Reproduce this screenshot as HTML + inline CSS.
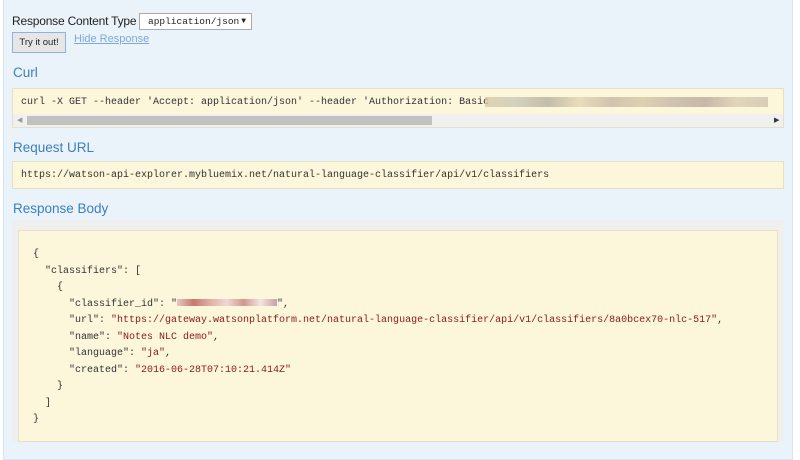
<!DOCTYPE html>
<html><head><style>
body{margin:0;width:800px;height:447px;overflow:hidden;background:#fff;font-family:"Liberation Sans",sans-serif;}
.wrap{position:absolute;left:3px;top:-2px;width:788px;height:460px;background:#ebf3fa;border:1px solid #d6e4f2;}
.abs{position:absolute;}
.mono{font-family:"Liberation Mono",monospace;font-size:10px;color:#333;}
h4{position:absolute;margin:0;font-weight:normal;font-size:13.5px;color:#3a7fbf;}
.box{position:absolute;background:#fcf6db;border:1px solid #e5e0c6;}
</style></head><body>
<div class="wrap"></div>
<div class="abs" style="left:12px;top:14px;font-size:12px;color:#222;letter-spacing:-0.2px">Response Content Type</div>
<div class="abs mono" style="left:139px;top:13px;width:113px;height:17px;background:#fff;border:1px solid #aaa;box-sizing:border-box;font-size:9.5px;line-height:15px;padding-left:8px;color:#222">application/json <span style="position:absolute;right:5px;font-size:8px">▼</span></div>
<div class="abs" style="left:12px;top:32px;width:54px;height:21px;background:#e6e6e6;border:1px solid #8fb3dd;box-sizing:border-box;font-size:9.5px;line-height:19px;text-align:center;color:#222">Try it out!</div>
<div class="abs" style="left:74px;top:33px;font-size:11px;color:#7ea9d8;text-decoration:underline">Hide Response</div>
<h4 style="left:13px;top:65px">Curl</h4>
<div class="box" style="left:12px;top:88px;width:770px;height:38px;overflow:hidden">
<div class="abs mono" style="left:8px;top:8px;white-space:nowrap">curl -X GET --header 'Accept: application/json' --header 'Authorization: Basic</div>
<div class="abs" style="left:472px;top:8px;width:283px;height:10px;background:linear-gradient(90deg,#d8c9a8,#c9c8b6,#b5b09a,#e2d6b4,#c6b8a4,#d4c7a7,#c2b6a5,#b9a99a,#d8cdb3,#cfc4ae);opacity:.8"></div>
<div class="abs" style="left:0;top:25px;width:770px;height:13px;background:#f0f0f0"></div>
<div class="abs" style="left:14px;top:27px;width:405px;height:9px;background:#c1c1c1"></div>
<div class="abs" style="left:4px;top:27px;font-size:7px;color:#999">◀</div>
<div class="abs" style="left:761px;top:27px;font-size:7px;color:#333">▶</div>
</div>
<h4 style="left:13px;top:140px">Request URL</h4>
<div class="box" style="left:12px;top:161px;width:770px;height:26px"><div class="abs mono" style="left:8px;top:8px">https://watson-api-explorer.mybluemix.net/natural-language-classifier/api/v1/classifiers</div></div>
<h4 style="left:13px;top:201px">Response Body</h4>
<div class="abs" style="left:12px;top:220px;width:772px;height:222px;background:#efefef"></div>
<div class="box" style="left:18px;top:230px;width:758px;height:210px">
<pre class="abs mono" style="left:14px;top:16px;margin:0;line-height:16.5px">{
  "classifiers": [
    {
      "classifier_id": "<span style="display:inline-block;width:100px;height:7px;background:linear-gradient(90deg,#e8c8c0,#c47a70,#e0b0a8,#f0d8d0,#d09890,#f5e5e0,#c8a0a8)"></span>",
      "url": <span style="color:#8b1a1a">"https://gateway.watsonplatform.net/natural-language-classifier/api/v1/classifiers/8a0bcex70-nlc-517"</span>,
      "name": <span style="color:#8b1a1a">"Notes NLC demo"</span>,
      "language": <span style="color:#8b1a1a">"ja"</span>,
      "created": <span style="color:#8b1a1a">"2016-06-28T07:10:21.414Z"</span>
    }
  ]
}</pre>
</div>
</body></html>
